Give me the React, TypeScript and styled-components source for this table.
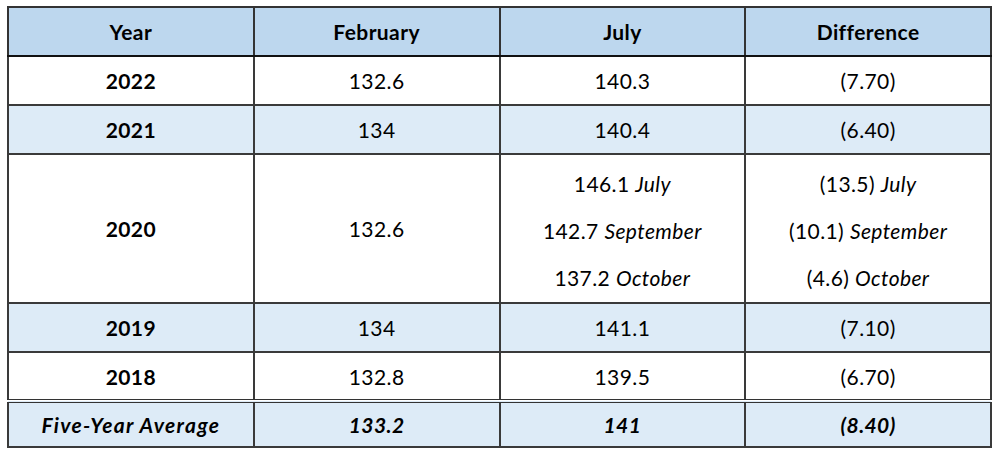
import styled, { createGlobalStyle } from 'styled-components'

const GlobalStyle = createGlobalStyle`
  html, body {
    margin: 0;
    padding: 0;
    background: #fff;
  }
  body {
    font-family: Lato, "Open Sans", sans-serif;
    color: #000;
  }
`;

const Wrapper = styled.div`
  width: 1000px;
  height: 457px;
  padding: 6px 8px 0 7px;
  box-sizing: border-box;
`;

const Table = styled.table`
  width: 985px;
  border-collapse: collapse;
  table-layout: fixed;
  border: 2px solid #222;
  font-size: 21px;
  letter-spacing: 0.4px;
`;

const HeadCell = styled.th`
  height: 47px;
  padding: 0;
  background: #bdd7ee;
  border: 2px solid #333;
  border-bottom-color: #111;
  font-weight: 700;
  text-align: center;
  vertical-align: middle;
`;

const Row = styled.tr<{ $striped?: boolean; $total?: boolean }>`
  background: ${p => (p.$striped ? '#ddebf7' : '#fff')};
  height: ${p => (p.$total ? '46px' : '49px')};

  td {
    border-top: ${p => (p.$total ? '4px double #333' : '2px solid #3a3a3a')};
    font-style: ${p => (p.$total ? 'italic' : 'normal')};
    font-weight: ${p => (p.$total ? 700 : 400)};
  }
`;

const Cell = styled.td<{ $bold?: boolean; $wide?: boolean }>`
  padding: 0;
  border: 2px solid #3a3a3a;
  text-align: center;
  vertical-align: middle;
  letter-spacing: ${p => (p.$wide ? '1.3px' : '0.4px')};
  && {
    font-weight: ${p => (p.$bold ? 700 : undefined)};
  }
`;

const Lines = styled.div`
  display: flex;
  flex-direction: column;
  align-items: center;
  padding: 5px 0 1px;
`;

const Line = styled.span`
  line-height: 47px;
`;

const Month = styled.em`
  font-style: italic;
`;

type Simple = { year: string; feb: string; jul: string; diff: string };

const top: Simple[] = [
  { year: '2022', feb: '132.6', jul: '140.3', diff: '(7.70)' },
  { year: '2021', feb: '134', jul: '140.4', diff: '(6.40)' },
];

const bottom: Simple[] = [
  { year: '2019', feb: '134', jul: '141.1', diff: '(7.10)' },
  { year: '2018', feb: '132.8', jul: '139.5', diff: '(6.70)' },
];

const split = [
  { jul: '146.1', diff: '(13.5)', month: 'July' },
  { jul: '142.7', diff: '(10.1)', month: 'September' },
  { jul: '137.2', diff: '(4.6)', month: 'October' },
];

const SimpleRow = ({ r, striped }: { r: Simple; striped: boolean }) => (
  <Row $striped={striped}>
    <Cell $bold>{r.year}</Cell>
    <Cell>{r.feb}</Cell>
    <Cell>{r.jul}</Cell>
    <Cell>{r.diff}</Cell>
  </Row>
);

export default function App() {
  return (
    <Wrapper>
      <GlobalStyle />
      <Table>
        <thead>
          <tr>
            <HeadCell>Year</HeadCell>
            <HeadCell>February</HeadCell>
            <HeadCell>July</HeadCell>
            <HeadCell>Difference</HeadCell>
          </tr>
        </thead>
        <tbody>
          {top.map((r, i) => (
            <SimpleRow key={r.year} r={r} striped={i % 2 === 1} />
          ))}
          <Row>
            <Cell $bold>2020</Cell>
            <Cell>132.6</Cell>
            <Cell>
              <Lines>
                {split.map(s => (
                  <Line key={s.month}>
                    {s.jul} <Month>{s.month}</Month>
                  </Line>
                ))}
              </Lines>
            </Cell>
            <Cell>
              <Lines>
                {split.map(s => (
                  <Line key={s.month}>
                    {s.diff} <Month>{s.month}</Month>
                  </Line>
                ))}
              </Lines>
            </Cell>
          </Row>
          {bottom.map((r, i) => (
            <SimpleRow key={r.year} r={r} striped={i % 2 === 0} />
          ))}
          <Row $striped $total>
            <Cell $wide>Five-Year Average</Cell>
            <Cell>133.2</Cell>
            <Cell>141</Cell>
            <Cell>(8.40)</Cell>
          </Row>
        </tbody>
      </Table>
    </Wrapper>
  );
}
